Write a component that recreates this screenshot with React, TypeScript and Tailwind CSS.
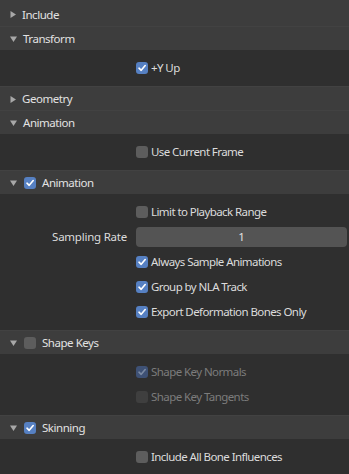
import React from 'react'

const font = { fontFamily: '"Noto Sans", "DejaVu Sans", sans-serif' }

const Arrow = ({ open }: { open: boolean }) =>
  open ? (
    <svg width="7" height="6" viewBox="0 0 7 6" className="shrink-0">
      <path d="M0 0.5 H7 L3.5 6 Z" fill="#a8a8a8" />
    </svg>
  ) : (
    <svg width="6" height="7" viewBox="0 0 6 7" className="shrink-0">
      <path d="M0.5 0 V7 L6 3.5 Z" fill="#a8a8a8" />
    </svg>
  )

const Check = ({ checked, dim }: { checked: boolean; dim?: boolean }) => {
  if (!checked)
    return (
      <span
        className={
          dim
            ? 'w-[12px] h-[12px] rounded-[3px] bg-[#3f3f3f] shrink-0'
            : 'w-[12px] h-[12px] rounded-[3px] bg-[#5d5d5d] shrink-0'
        }
      />
    )
  return (
    <span
      className={
        dim
          ? 'w-[12px] h-[12px] rounded-[3px] bg-[#3e5175] flex items-center justify-center shrink-0'
          : 'w-[12px] h-[12px] rounded-[3px] bg-[#5680c2] flex items-center justify-center shrink-0'
      }
    >
      <svg width="10" height="10" viewBox="0 0 10 10">
        <path
          d="M2 5.2 L4.2 7.3 L8.2 2.5"
          fill="none"
          stroke={dim ? '#7b8aa3' : '#ffffff'}
          strokeWidth="1.6"
          strokeLinecap="round"
          strokeLinejoin="round"
        />
      </svg>
    </span>
  )
}

type HeaderProps = { title: string; open: boolean; check?: boolean; first?: boolean }

const Header = ({ title, open, check, first }: HeaderProps) => (
  <div
    className={
      first
        ? 'h-[26px] bg-[#3d3d3d] flex items-center pl-[10px] gap-[7px] pt-[3px]'
        : 'h-[24px] bg-[#3d3d3d] flex items-center pl-[10px] gap-[7px] pt-[1px] border-t border-[#424242]'
    }
  >
    <Arrow open={open} />
    {check !== undefined && <Check checked={check} />}
    <span className="text-[11.5px] tracking-[-0.04em] leading-[14px] text-[#e2e2e2] -ml-[1px]">{title}</span>
  </div>
)

const Row = ({ label, checked, dim }: { label: string; checked: boolean; dim?: boolean }) => (
  <div className="h-[25px] flex items-center pl-[136px] gap-[3px]">
    <Check checked={checked} dim={dim} />
    <span
      className={
        dim
          ? 'text-[11.5px] tracking-[-0.05em] leading-[14px] text-[#7c7c7c]'
          : 'text-[11.5px] tracking-[-0.05em] leading-[14px] text-[#dcdcdc]'
      }
    >
      {label}
    </span>
  </div>
)

const Body = ({ children }: { children: React.ReactNode }) => (
  <div className="bg-[#2f2f2f] pt-[5px] pb-[6px]">{children}</div>
)

export default function App() {
  return (
    <div className="w-[349px] h-[474px] overflow-hidden bg-[#2f2f2f]" style={font}>
      <Header title="Include" open={false} first />
      <Header title="Transform" open />
      <Body>
        <Row label="+Y Up" checked />
      </Body>
      <Header title="Geometry" open={false} />
      <Header title="Animation" open />
      <Body>
        <Row label="Use Current Frame" checked={false} />
      </Body>
      <Header title="Animation" open check />
      <Body>
        <Row label="Limit to Playback Range" checked={false} />
        <div className="h-[25px] flex items-center">
          <span className="w-[127px] text-right text-[11.5px] tracking-[-0.02em] leading-[14px] text-[#dcdcdc]">
            Sampling Rate
          </span>
          <div className="ml-[9px] w-[211px] h-[20px] rounded-[4px] bg-[#545454] flex items-center justify-center text-[11.5px] text-[#e2e2e2]">
            1
          </div>
        </div>
        <Row label="Always Sample Animations" checked />
        <Row label="Group by NLA Track" checked />
        <Row label="Export Deformation Bones Only" checked />
      </Body>
      <Header title="Shape Keys" open check={false} />
      <Body>
        <Row label="Shape Key Normals" checked dim />
        <Row label="Shape Key Tangents" checked={false} dim />
      </Body>
      <Header title="Skinning" open check />
      <Body>
        <Row label="Include All Bone Influences" checked={false} />
      </Body>
    </div>
  )
}
